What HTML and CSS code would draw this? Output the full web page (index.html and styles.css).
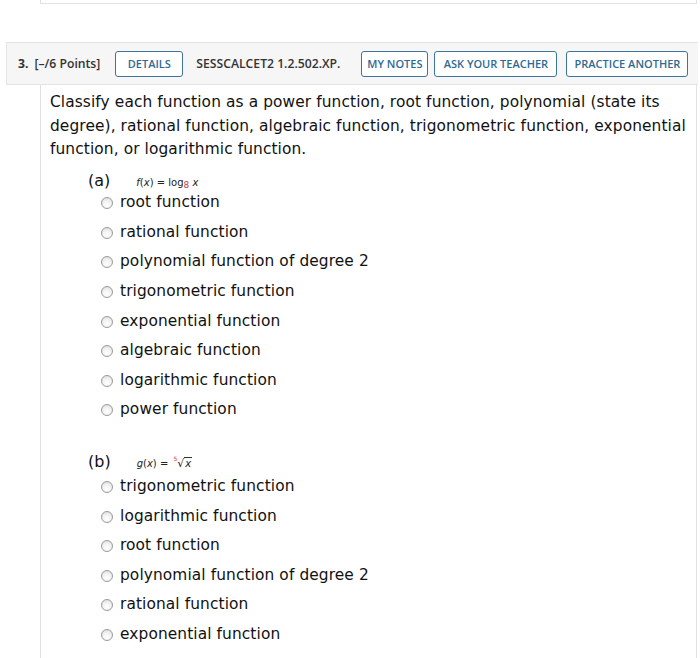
FILE: index.html
```html
<!DOCTYPE html>
<html>
<head>
<meta charset="utf-8">
<link rel="stylesheet" href="styles.css">
</head>
<body>
<div class="prev"></div>
<div class="qhead">
  <span class="qnum">3.</span>
  <span class="pts">[–/6 Points]</span>
  <span class="btn b-details">DETAILS</span>
  <span class="code">SESSCALCET2 1.2.502.XP.</span>
  <span class="btn b-notes">MY NOTES</span>
  <span class="btn b-ask">ASK YOUR TEACHER</span>
  <span class="btn b-practice">PRACTICE ANOTHER</span>
</div>
<div class="qbody">
  <p class="prompt">Classify each function as a power function, root function, polynomial (state its degree), rational function, algebraic function, trigonometric function, exponential function, or logarithmic function.</p>
  <div class="part">
    <div class="plabel"><span class="pl">(a)</span><span class="math"><i>f</i>(<i>x</i>) = log<sub class="red">8</sub> <i>x</i></span></div>
    <ul class="opts">
      <li><span class="radio"></span>root function</li>
      <li><span class="radio"></span>rational function</li>
      <li><span class="radio"></span>polynomial function of degree 2</li>
      <li><span class="radio"></span>trigonometric function</li>
      <li><span class="radio"></span>exponential function</li>
      <li><span class="radio"></span>algebraic function</li>
      <li><span class="radio"></span>logarithmic function</li>
      <li><span class="radio"></span>power function</li>
    </ul>
  </div>
  <div class="part part-b">
    <div class="plabel plabel-b"><span class="pl">(b)</span><span class="math"><i>g</i>(<i>x</i>) = <span class="root"><span class="red idx">5</span><span class="rad">√</span><span class="over"><i>x</i></span></span></span></div>
    <ul class="opts">
      <li><span class="radio"></span>trigonometric function</li>
      <li><span class="radio"></span>logarithmic function</li>
      <li><span class="radio"></span>root function</li>
      <li><span class="radio"></span>polynomial function of degree 2</li>
      <li><span class="radio"></span>rational function</li>
      <li><span class="radio"></span>exponential function</li>
    </ul>
  </div>
</div>
</body>
</html>
```
FILE: styles.css
```css
html, body { margin: 0; padding: 0; background: #fff; }
body { width: 700px; height: 658px; overflow: hidden; }

.prev {
  margin-left: 40px;
  width: 655px;
  height: 3px;
  border: 1px solid #e2e2e2;
  border-top: none;
}

.qhead {
  margin-top: 38px;
  margin-left: 6px;
  width: 692px;
  height: 43px;
  box-sizing: border-box;
  background: #f6f6f6;
  border: 1px solid #e4e4e4;
  border-right: none;
  display: flex;
  align-items: center;
  font-family: "Open Sans", "Liberation Sans", sans-serif;
  color: #333;
  font-size: 12.2px;
  font-weight: 600;
}
.qnum { margin-left: 11px; font-weight: 700; }
.pts { margin-left: 6px; }
.btn {
  display: inline-flex;
  align-items: center;
  justify-content: center;
  height: 26px;
  box-sizing: border-box;
  border: 1px solid #3c759d;
  border-radius: 3px;
  background: #fff;
  color: #2f6a92;
  font-size: 11px;
  font-weight: 600;
}
.b-details { width: 68px; margin-left: 15px; }
.code { margin-left: 13px; }
.b-notes { width: 67px; margin-left: 21px; }
.b-ask { width: 123px; margin-left: 6px; }
.b-practice { width: 122px; margin-left: 9px; }

.qbody {
  margin-left: 40px;
  width: 657px;
  height: 600px;
  box-sizing: border-box;
  border-left: 1px solid #e2e2e2;
  border-right: 1px solid #e2e2e2;
  padding: 6px 0 0 9px;
  font-family: "DejaVu Sans", Verdana, sans-serif;
  color: #111;
}
.prompt {
  margin: 0;
  font-size: 15.4px;
  line-height: 23.5px;
  letter-spacing: 0.1px;
}
.part { margin-top: 9px; }
.part-b { margin-top: 28px; }
.plabel {
  display: flex;
  align-items: baseline;
  height: 17px;
  margin-left: 38px;
}
.plabel-b { height: 19px; }
.pl { font-size: 16px; }
.math {
  margin-left: 26px;
  font-size: 10px;
  color: #222;
}
.math sub { font-size: 9px; vertical-align: -2px; }
.red { color: #d0343c; }
.root { display: inline-flex; align-items: baseline; margin-left: 2px; }
.idx { font-size: 6px; position: relative; top: -6px; margin-right: 0; }
.rad { font-size: 11px; }
.over { border-top: 1px solid #333; padding: 0 1px; line-height: 11px; }

.opts {
  list-style: none;
  margin: 0;
  padding: 0 0 0 52px;
}
.opts li {
  display: flex;
  align-items: center;
  height: 29.6px;
  font-size: 15.4px;
  letter-spacing: 0.1px;
}
.radio {
  width: 12px;
  height: 12px;
  border-radius: 50%;
  border: 1px solid #9a9a9a;
  background: radial-gradient(circle at 50% 70%, #ffffff 0%, #f3f3f3 45%, #d8d8d8 100%);
  margin-right: 7px;
  margin-left: -1px;
  box-sizing: border-box;
  flex: none;
  margin-top: 2px;
}
```
